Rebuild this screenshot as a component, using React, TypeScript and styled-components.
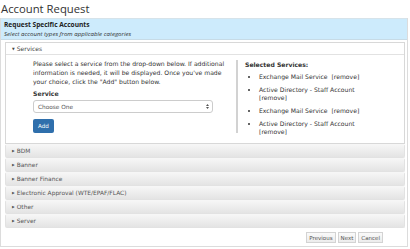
import * as React from 'react'
import styled, { createGlobalStyle } from 'styled-components'

const GlobalStyle = createGlobalStyle`
    body {
        margin: 0;
        background: #fff;
        font-family: "DejaVu Sans", Verdana, sans-serif;
        color: #333;
    }
`

const Page = styled.div`
    width: 410px;
    height: 249px;
    overflow: hidden;
`

const Title = styled.h1`
    font-family: "Open Sans", sans-serif;
    font-size: 11.3px;
    font-weight: 400;
    line-height: 18px;
    height: 18px;
    margin: 0;
    padding-left: 1px;
    color: #333;
`

const Panel = styled.div`
    width: 406px;
    border: 1px solid #dcdcdc;
    border-top: 0;
`

const PanelHeader = styled.div`
    font-family: "Open Sans", sans-serif;
    background: #cdebfc;
    border-top: 1px solid #d6e3ea;
    border-bottom: 1px solid #c7dbe6;
    height: 22px;
    padding: 2px 3px 0;
    box-sizing: border-box;
`

const PanelTitle = styled.div`
    font-size: 6.6px;
    font-weight: 700;
    line-height: 8px;
    color: #222;
`

const PanelSub = styled.div`
    font-size: 6.1px;
    font-style: italic;
    line-height: 9px;
    color: #333;
`

const PanelBody = styled.div`
    padding: 2px 2px 3px 4px;
`

const Accordion = styled.div`
    display: flex;
    flex-direction: column;
`

const OpenSection = styled.div`
    border: 1px solid #d8d8d8;
    background: #fff;
`

const OpenHeader = styled.div`
    height: 11px;
    line-height: 11px;
    font-size: 6px;
    padding-left: 6px;
    color: #444;
    border-bottom: 1px solid #e2e2e2;
`

const Content = styled.div`
    display: flex;
    box-sizing: border-box;
    padding: 4px 0 0 27px;
    height: 88px;
`

const LeftCol = styled.div`
    width: 203px;
    flex-shrink: 0;
    padding-right: 5px;
    box-sizing: border-box;
`

const Help = styled.p`
    margin: 0;
    font-size: 6.1px;
    line-height: 9px;
    color: #333;
`

const Label = styled.div`
    font-size: 6.2px;
    font-weight: 700;
    margin-top: 3px;
    line-height: 9px;
    color: #333;
`

const Select = styled.div`
    width: 180px;
    height: 13px;
    box-sizing: border-box;
    border: 1px solid #ccc;
    border-radius: 3px;
    display: flex;
    align-items: center;
    justify-content: space-between;
    padding: 0 3px 0 4px;
    font-size: 5.8px;
    color: #555;
    margin-top: 2px;
`

const Spin = styled.span`
    display: flex;
    flex-direction: column;
    gap: 1px;
`

const AddButton = styled.div`
    margin-top: 6px;
    width: 21px;
    height: 14px;
    background: #2f6fac;
    border-radius: 2px;
    color: #fff;
    font-size: 5.6px;
    display: flex;
    align-items: center;
    justify-content: center;
`

const RightCol = styled.div`
    border-left: 2px solid #d2d2d2;
    height: 73px;
    margin-top: 1px;
    padding-left: 7px;
    width: 134px;
`

const SelTitle = styled.div`
    font-size: 6.1px;
    font-weight: 700;
    line-height: 9px;
    color: #333;
`

const List = styled.ul`
    margin: 4px 0 0;
    padding-left: 14px;
    font-size: 6.1px;
    line-height: 8px;
    color: #333;
    li {
        margin-bottom: 5px;
    }
`

const Row = styled.div`
    height: 12px;
    line-height: 12px;
    font-size: 5.9px;
    color: #555;
    padding-left: 6px;
    border: 1px solid #e2e2e2;
    border-top-color: #f6f6f6;
    border-radius: 2px;
    background: linear-gradient(#f6f6f6, #e4e4e4);
`

const Caret = styled.span`
    font-size: 3.5px;
    margin-right: 2px;
    vertical-align: 1px;
`

const Footer = styled.div`
    display: flex;
    justify-content: flex-end;
    gap: 2px;
    padding: 4px 22px 0 0;
`

const NavButton = styled.div`
    height: 11px;
    line-height: 10px;
    box-sizing: border-box;
    padding: 0 2px;
    font-size: 5.5px;
    color: #555;
    border: 1px solid #d3d3d3;
    background: linear-gradient(#fafafa, #ececec);
`

const categories = ['BDM', 'Banner', 'Banner Finance', 'Electronic Approval (WTE/EPAF/FLAC)', 'Other', 'Server']

const selected = [
    'Exchange Mail Service\u00a0\u00a0[remove]',
    'Active Directory - Staff Account [remove]',
    'Exchange Mail Service\u00a0\u00a0[remove]',
    'Active Directory - Staff Account [remove]',
]

export default function App() {
    return (
        <Page>
            <GlobalStyle />
            <Title>Account Request</Title>
            <Panel>
                <PanelHeader>
                    <PanelTitle>Request Specific Accounts</PanelTitle>
                    <PanelSub>Select account types from applicable categories</PanelSub>
                </PanelHeader>
                <PanelBody>
                    <Accordion>
                        <OpenSection>
                            <OpenHeader><Caret>▼</Caret>Services</OpenHeader>
                            <Content>
                                <LeftCol>
                                    <Help>
                                        Please select a service from the drop-down below. If additional
                                        information is needed, it will be displayed. Once you've made
                                        your choice, click the "Add" button below.
                                    </Help>
                                    <Label>Service</Label>
                                    <Select>
                                        Choose One
                                        <Spin>
                                            <svg width="3" height="2" viewBox="0 0 3 2"><path d="M0 2 L1.5 0 L3 2Z" fill="#555" /></svg>
                                            <svg width="3" height="2" viewBox="0 0 3 2"><path d="M0 0 L1.5 2 L3 0Z" fill="#555" /></svg>
                                        </Spin>
                                    </Select>
                                    <AddButton>Add</AddButton>
                                </LeftCol>
                                <RightCol>
                                    <SelTitle>Selected Services:</SelTitle>
                                    <List>
                                        {selected.map((s, i) => (
                                            <li key={i}>{s}</li>
                                        ))}
                                    </List>
                                </RightCol>
                            </Content>
                        </OpenSection>
                        {categories.map((c) => (
                            <Row key={c}><Caret>▶</Caret>{c}</Row>
                        ))}
                    </Accordion>
                    <Footer>
                        <NavButton>Previous</NavButton>
                        <NavButton>Next</NavButton>
                        <NavButton>Cancel</NavButton>
                    </Footer>
                </PanelBody>
            </Panel>
        </Page>
    )
}
